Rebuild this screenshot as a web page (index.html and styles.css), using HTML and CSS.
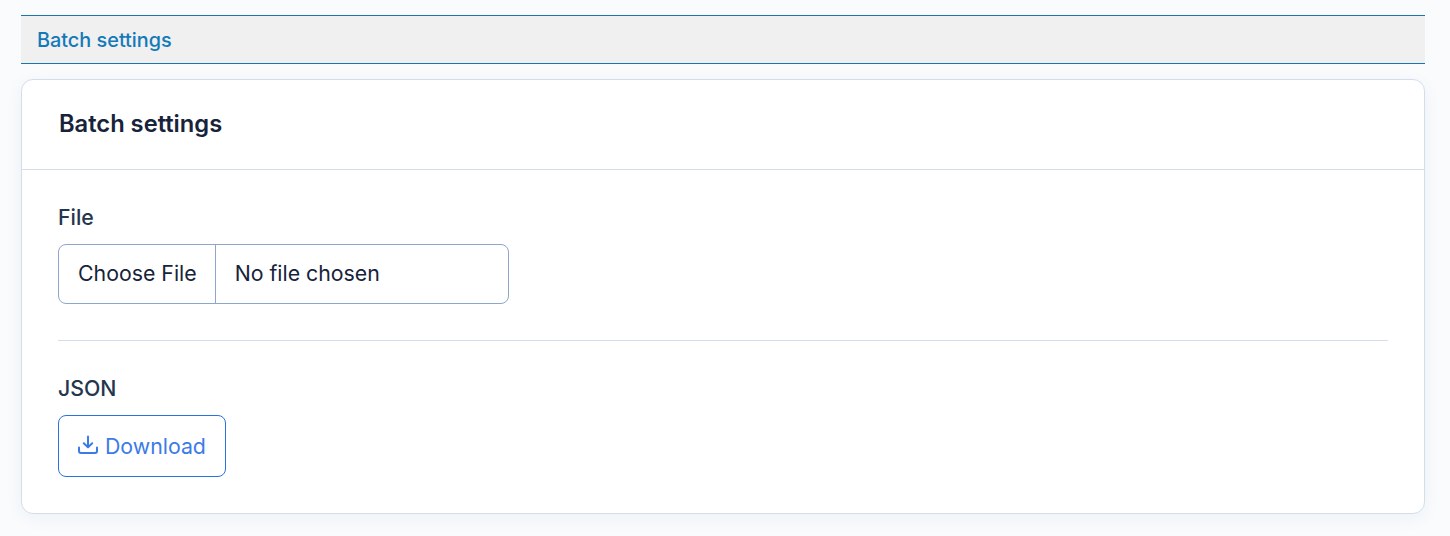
FILE: index.html
```html
<!DOCTYPE html>
<html lang="en">
<head>
  <meta charset="UTF-8" />
  <title>Batch settings</title>
  <link rel="stylesheet" href="styles.css">
</head>
<body>

<div class="page">
  <div class="title-bar">
    <a class="title-link" href="#">Batch settings</a>
  </div>

  <div class="card">
    <div class="card-header">
      <h2>Batch settings</h2>
    </div>

    <div class="card-body">
      <label class="field-label">File</label>
      <div class="file-input">
        <span class="file-button">Choose File</span>
        <span class="file-name">No file chosen</span>
      </div>

      <hr class="divider" />

      <label class="field-label">JSON</label>
      <a class="download-btn" href="#">
        <svg class="download-icon" viewBox="0 0 20 20" fill="none" stroke="currentColor" stroke-width="2" stroke-linecap="round" stroke-linejoin="round">
          <path d="M10 1.5v10.5" />
          <path d="M5.8 8.2L10 12.2l4.2-4" />
          <path d="M1 12.5v3.5a2 2 0 0 0 2 2h14a2 2 0 0 0 2-2v-3.5" />
        </svg>
        Download
      </a>
    </div>
  </div>
</div>

</body>
</html>
```

FILE: styles.css
```css
body {
  font-family: "Inter", "Liberation Sans", sans-serif;
  background: #f9fbfd;
  margin: 0;
  padding: 0;
}

.page {
  padding: 15px 25px 22px 21px;
}

.title-bar {
  height: 49px;
  display: flex;
  align-items: center;
  padding-left: 16px;
  box-sizing: border-box;
  background: #f0f0f0;
  border-top: 1px solid #1c75b0;
  border-bottom: 1px solid #1c75b0;
}

.title-link {
  color: #1479b8;
  font-size: 19.85px;
  font-weight: 500;
  text-decoration: none;
}

.card {
  margin-top: 15px;
  background: white;
  border: 1px solid #d3ddeb;
  border-radius: 12px;
  box-shadow: 0 4px 18px rgba(30,50,90,0.05);
}

.card-header {
  height: 90px;
  display: flex;
  align-items: center;
  padding-left: 37px;
  padding-bottom: 2px;
  box-sizing: border-box;
  border-bottom: 1px solid #d3ddeb;
}

.card-header h2 {
  margin: 0;
  color: #16233a;
  font-size: 23.7px;
  font-weight: 600;
}

.card-body {
  padding: 36px;
}

.field-label {
  display: block;
  color: #24364e;
  font-size: 21.3px;
  font-weight: 500;
  line-height: 22px;
  margin-bottom: 16px;
}

.file-input {
  display: flex;
  align-items: stretch;
  width: 449px;
  height: 58px;
  border: 1px solid #8fa6cc;
  border-radius: 8px;
  color: #16233a;
  font-size: 21.3px;
}

.file-button {
  display: flex;
  align-items: center;
  padding: 0 18px 2px 19px;
  border-right: 1px solid #8fa6cc;
}

.file-name {
  display: flex;
  align-items: center;
  padding: 0 0 2px 19px;
}

.divider {
  border: none;
  border-top: 1px solid #d3ddeb;
  margin: 36px 0 36px 0;
}

.download-btn {
  display: inline-flex;
  align-items: center;
  gap: 7px;
  height: 60px;
  padding: 0 19px;
  border: 1px solid #2a72e0;
  border-radius: 8px;
  color: #3b7be8;
  font-size: 21.3px;
  text-decoration: none;
}

.download-icon {
  width: 20px;
  height: 20px;
  margin-bottom: 3px;
}
```
